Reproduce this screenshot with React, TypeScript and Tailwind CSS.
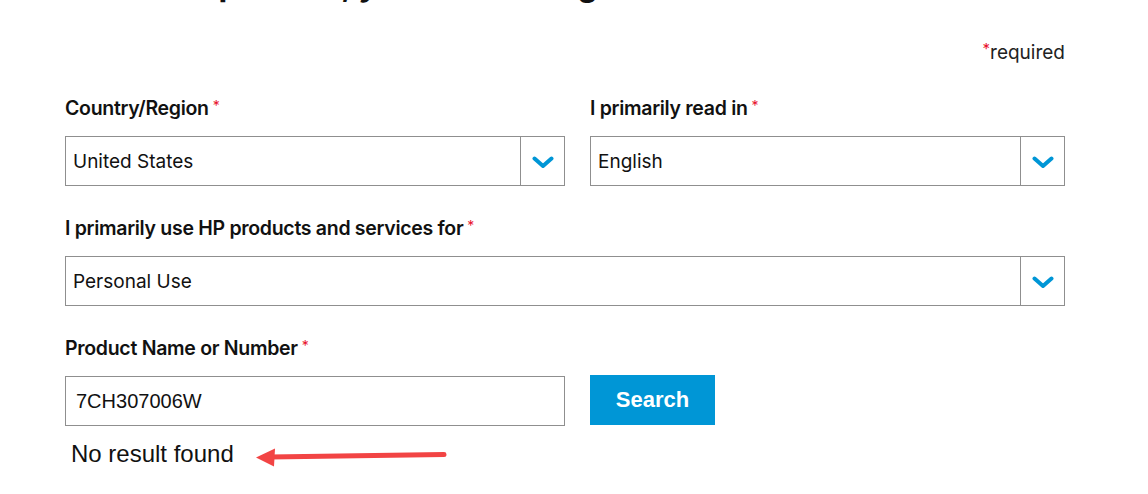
import { ReactNode } from "react";

const SANS = "font-['Inter','Noto_Sans',sans-serif]";
const ARIAL = "font-['Liberation_Sans',Arial,sans-serif]";

function Chevron() {
  return (
    <svg width="22" height="13" viewBox="0 0 22 13" fill="none">
      <path
        d="M2.5 2.5 L11 10 L19.5 2.5"
        stroke="#0096d6"
        strokeWidth="4"
        strokeLinecap="round"
        strokeLinejoin="round"
      />
    </svg>
  );
}

function Label({ children }: { children: ReactNode }) {
  return (
    <p className="flex h-6 items-center text-[19.5px] font-semibold tracking-[-0.3px] text-[#111]">
      {children}
      <span className="ml-1 -mt-2 text-[14px] font-normal text-[#e8112d]">*</span>
    </p>
  );
}

function Select({ value }: { value: string }) {
  return (
    <div className="flex h-[50px] w-full border border-[#8f8f8f] bg-white">
      <div className="flex flex-1 items-center pl-[7px] pt-[2px] text-[19px] text-[#111]">{value}</div>
      <div className="flex w-[44px] items-center justify-center border-l border-[#8f8f8f] pt-[2px]">
        <Chevron />
      </div>
    </div>
  );
}

export default function App() {
  return (
    <div className={`h-[494px] w-[1148px] overflow-hidden bg-white ${SANS}`}>
      <div className="w-[1065px] pl-[65px]">
        <h1 className="-mt-[35px] text-[32px] font-bold leading-[40px] text-[#111]">
          Choose a product, your HP settings
        </h1>

        <div className="mt-[36px] flex justify-end text-[19px] leading-6 text-[#222]">
          <span className="-mt-1 text-[15px] text-[#e8112d]">*</span>
          required
        </div>

        <div className="mt-[32px] grid grid-cols-[500px_1fr] gap-x-[25px]">
          <div>
            <Label>Country/Region</Label>
            <div className="mt-[15px]">
              <Select value="United States" />
            </div>
          </div>
          <div>
            <Label>I primarily read in</Label>
            <div className="mt-[15px]">
              <Select value="English" />
            </div>
          </div>
        </div>

        <div className="mt-[31px]">
          <Label>I primarily use HP products and services for</Label>
          <div className="mt-[15px]">
            <Select value="Personal Use" />
          </div>
        </div>

        <div className="mt-[31px]">
          <Label>Product Name or Number</Label>
          <div className="mt-[15px] flex items-start gap-[25px]">
            <div
              className={`flex h-[50px] w-[500px] items-center border border-[#8f8f8f] pl-[10px] text-[20px] text-[#111] ${ARIAL}`}
            >
              7CH307006W
            </div>
            <button
              className={`-mt-px flex h-[50px] w-[125px] items-center justify-center bg-[#0096d6] pb-[2px] text-[22px] font-bold text-white ${ARIAL}`}
            >
              Search
            </button>
          </div>
        </div>

        <div className="mt-[14px] flex items-start">
          <p className={`pl-[6px] text-[24px] leading-[28px] text-[#111] ${ARIAL}`}>No result found</p>
          <svg width="200" height="24" viewBox="0 0 200 24" className="ml-[22px] mt-[6px]">
            <path d="M14 11 L188 8.5" stroke="#f24444" strokeWidth="5" strokeLinecap="round" />
            <path d="M0 11.5 L19 2.5 L18 20.5 Z" fill="#f24444" />
          </svg>
        </div>
      </div>
    </div>
  );
}
